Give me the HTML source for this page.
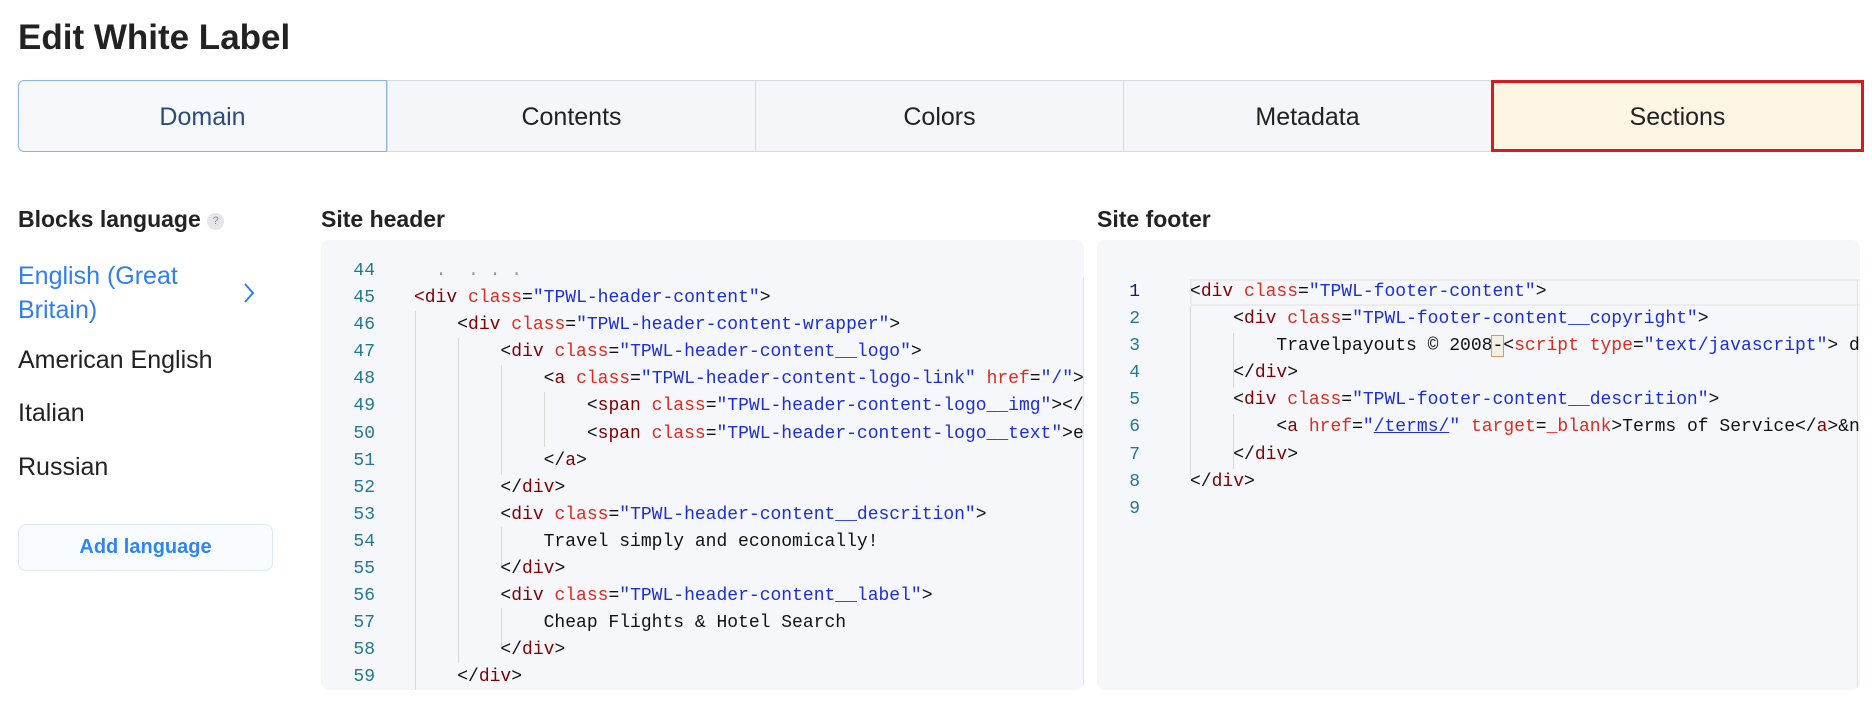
<!DOCTYPE html>
<html><head><meta charset="utf-8"><style>
*{box-sizing:border-box;margin:0;padding:0}
body{width:1872px;height:712px;background:#fff;font-family:"Liberation Sans",sans-serif;color:#222;position:relative;overflow:hidden}
.abs{position:absolute}
h1{position:absolute;left:18px;top:18px;font-size:35px;font-weight:bold;color:#222}
.tabs{position:absolute;left:18px;top:80px;width:1846px;height:72px;display:flex;border:1px solid #d5d9e0;border-radius:6px;background:#f4f6f9}
.tab{flex:1;display:flex;align-items:center;justify-content:center;font-size:25px;color:#222;border-left:1px solid #d5d9e0;padding-top:2px}
.tab:first-child{border:1px solid #8fb3e6;margin:-1px 0 -1px -1px;border-radius:6px 0 0 6px;color:#2b4c7c;background:#f6f8fb}
.tab.sel{background:#fdf5e4;border:3px solid #d71a1a;margin:-1px -1px -1px 0}
.lbl{font-size:23px;font-weight:bold;color:#222}
.lang{position:absolute;left:18px;font-size:25px;color:#222}
.panel{position:absolute;top:240px;height:450px;background:#f5f7fb;border-radius:8px;overflow:hidden}
.code{position:absolute;font-family:"Liberation Mono",monospace;font-size:18px;line-height:27.1px;white-space:pre;color:#111}
.ln{position:absolute;font-family:"Liberation Mono",monospace;font-size:18px;line-height:27.1px;color:#237893;text-align:right;width:40px}
.t{color:#800000}.a{color:#e02a1c}.s{color:#1a2fd6}
.g{position:absolute;width:1px;background:#d8d8d8}
</style></head><body>
<h1>Edit White Label</h1>
<div class="tabs">
<div class="tab">Domain</div><div class="tab">Contents</div><div class="tab">Colors</div><div class="tab">Metadata</div><div class="tab sel">Sections</div>
</div>
<div class="abs lbl" style="left:18px;top:206px">Blocks language <span style="display:inline-block;width:17px;height:17px;border-radius:50%;background:#e4e6ea;color:#888;font-size:11px;font-weight:normal;text-align:center;line-height:17px;vertical-align:3px">?</span></div>
<div class="abs lbl" style="left:321px;top:206px">Site header</div>
<div class="abs lbl" style="left:1097px;top:206px">Site footer</div>
<div class="lang" style="top:259px;color:#2e7ff0;line-height:34px">English (Great<br>Britain)</div>
<svg class="abs" style="left:242px;top:282px" width="14" height="22" viewBox="0 0 14 22"><path d="M3 2 L11 11 L3 20" fill="none" stroke="#2e7ff0" stroke-width="2"/></svg>
<div class="lang" style="top:346px">American English</div>
<div class="lang" style="top:399px">Italian</div>
<div class="lang" style="top:453px">Russian</div>
<div class="abs" style="left:18px;top:524px;width:255px;height:47px;border:1px solid #dfe8f5;border-radius:8px;background:#f8fbff;color:#2e86ef;font-size:20px;font-weight:bold;text-align:center;line-height:45px">Add language</div>

<div class="panel" style="left:321px;width:763px">
<div class="ln" style="left:14px;top:18px">44<br>45<br>46<br>47<br>48<br>49<br>50<br>51<br>52<br>53<br>54<br>55<br>56<br>57<br>58<br>59</div>
<div class="g" style="left:762px;top:38px;height:420px;background:#e2e2e2"></div>
<div class="g" style="left:94px;top:71px;height:380px"></div>
<div class="g" style="left:137px;top:98px;height:325px"></div>
<div class="g" style="left:180px;top:125px;height:110px"></div>
<div class="g" style="left:223px;top:152px;height:55px"></div>
<div class="g" style="left:180px;top:287px;height:40px"></div>
<div class="g" style="left:180px;top:368px;height:40px"></div>
<div class="code" style="left:93px;top:18px"><span style="color:#999">  .  . . .</span>
<span class="t">&lt;div</span> <span class="a">class</span>=<span class="s">"TPWL-header-content"</span>&gt;
    &lt;<span class="t">div</span> <span class="a">class</span>=<span class="s">"TPWL-header-content-wrapper"</span>&gt;
        &lt;<span class="t">div</span> <span class="a">class</span>=<span class="s">"TPWL-header-content__logo"</span>&gt;
            &lt;<span class="t">a</span> <span class="a">class</span>=<span class="s">"TPWL-header-content-logo-link"</span> <span class="a">href</span>=<span class="s">"/"</span>&gt;&lt;/
                &lt;<span class="t">span</span> <span class="a">class</span>=<span class="s">"TPWL-header-content-logo__img"</span>&gt;&lt;/
                &lt;<span class="t">span</span> <span class="a">class</span>=<span class="s">"TPWL-header-content-logo__text"</span>&gt;e
            &lt;/<span class="t">a</span>&gt;
        &lt;/<span class="t">div</span>&gt;
        &lt;<span class="t">div</span> <span class="a">class</span>=<span class="s">"TPWL-header-content__descrition"</span>&gt;
            Travel simply and economically!
        &lt;/<span class="t">div</span>&gt;
        &lt;<span class="t">div</span> <span class="a">class</span>=<span class="s">"TPWL-header-content__label"</span>&gt;
            Cheap Flights &amp; Hotel Search
        &lt;/<span class="t">div</span>&gt;
    &lt;/<span class="t">div</span>&gt;</div>
</div>

<div class="panel" style="left:1097px;width:763px">
<div class="abs" style="left:93px;top:39px;width:670px;height:27px;border:2px solid #ececec;border-right:none"></div>
<div class="ln" style="left:3px;top:39px"><span style="color:#0b216f">1</span><br>2<br>3<br>4<br>5<br>6<br>7<br>8<br>9</div>
<div class="g" style="left:93px;top:66px;height:170px"></div>
<div class="g" style="left:136px;top:93px;height:55px"></div>
<div class="g" style="left:136px;top:174px;height:55px"></div>
<div class="g" style="left:760px;top:40px;height:420px;background:#e2e2e2"></div>
<div class="code" style="left:93px;top:39px">&lt;<span class="t">div</span> <span class="a">class</span>=<span class="s">"TPWL-footer-content"</span>&gt;
    &lt;<span class="t">div</span> <span class="a">class</span>=<span class="s">"TPWL-footer-content__copyright"</span>&gt;
        Travelpayouts © 2008<span style="background:#f5f0e6;outline:1px solid #c8a060">-</span>&lt;<span class="a">script</span> <span class="a">type</span>=<span class="s">"text/javascript"</span>&gt; d
    &lt;/<span class="t">div</span>&gt;
    &lt;<span class="t">div</span> <span class="a">class</span>=<span class="s">"TPWL-footer-content__descrition"</span>&gt;
        &lt;<span class="t">a</span> <span class="a">href</span>=<span class="s">"<u>/terms/</u>"</span> <span class="a">target</span>=<span class="a">_blank</span>&gt;Terms of Service&lt;/<span class="t">a</span>&gt;&amp;n
    &lt;/<span class="t">div</span>&gt;
&lt;/<span class="t">div</span>&gt;
</div>
</div>
</body></html>
